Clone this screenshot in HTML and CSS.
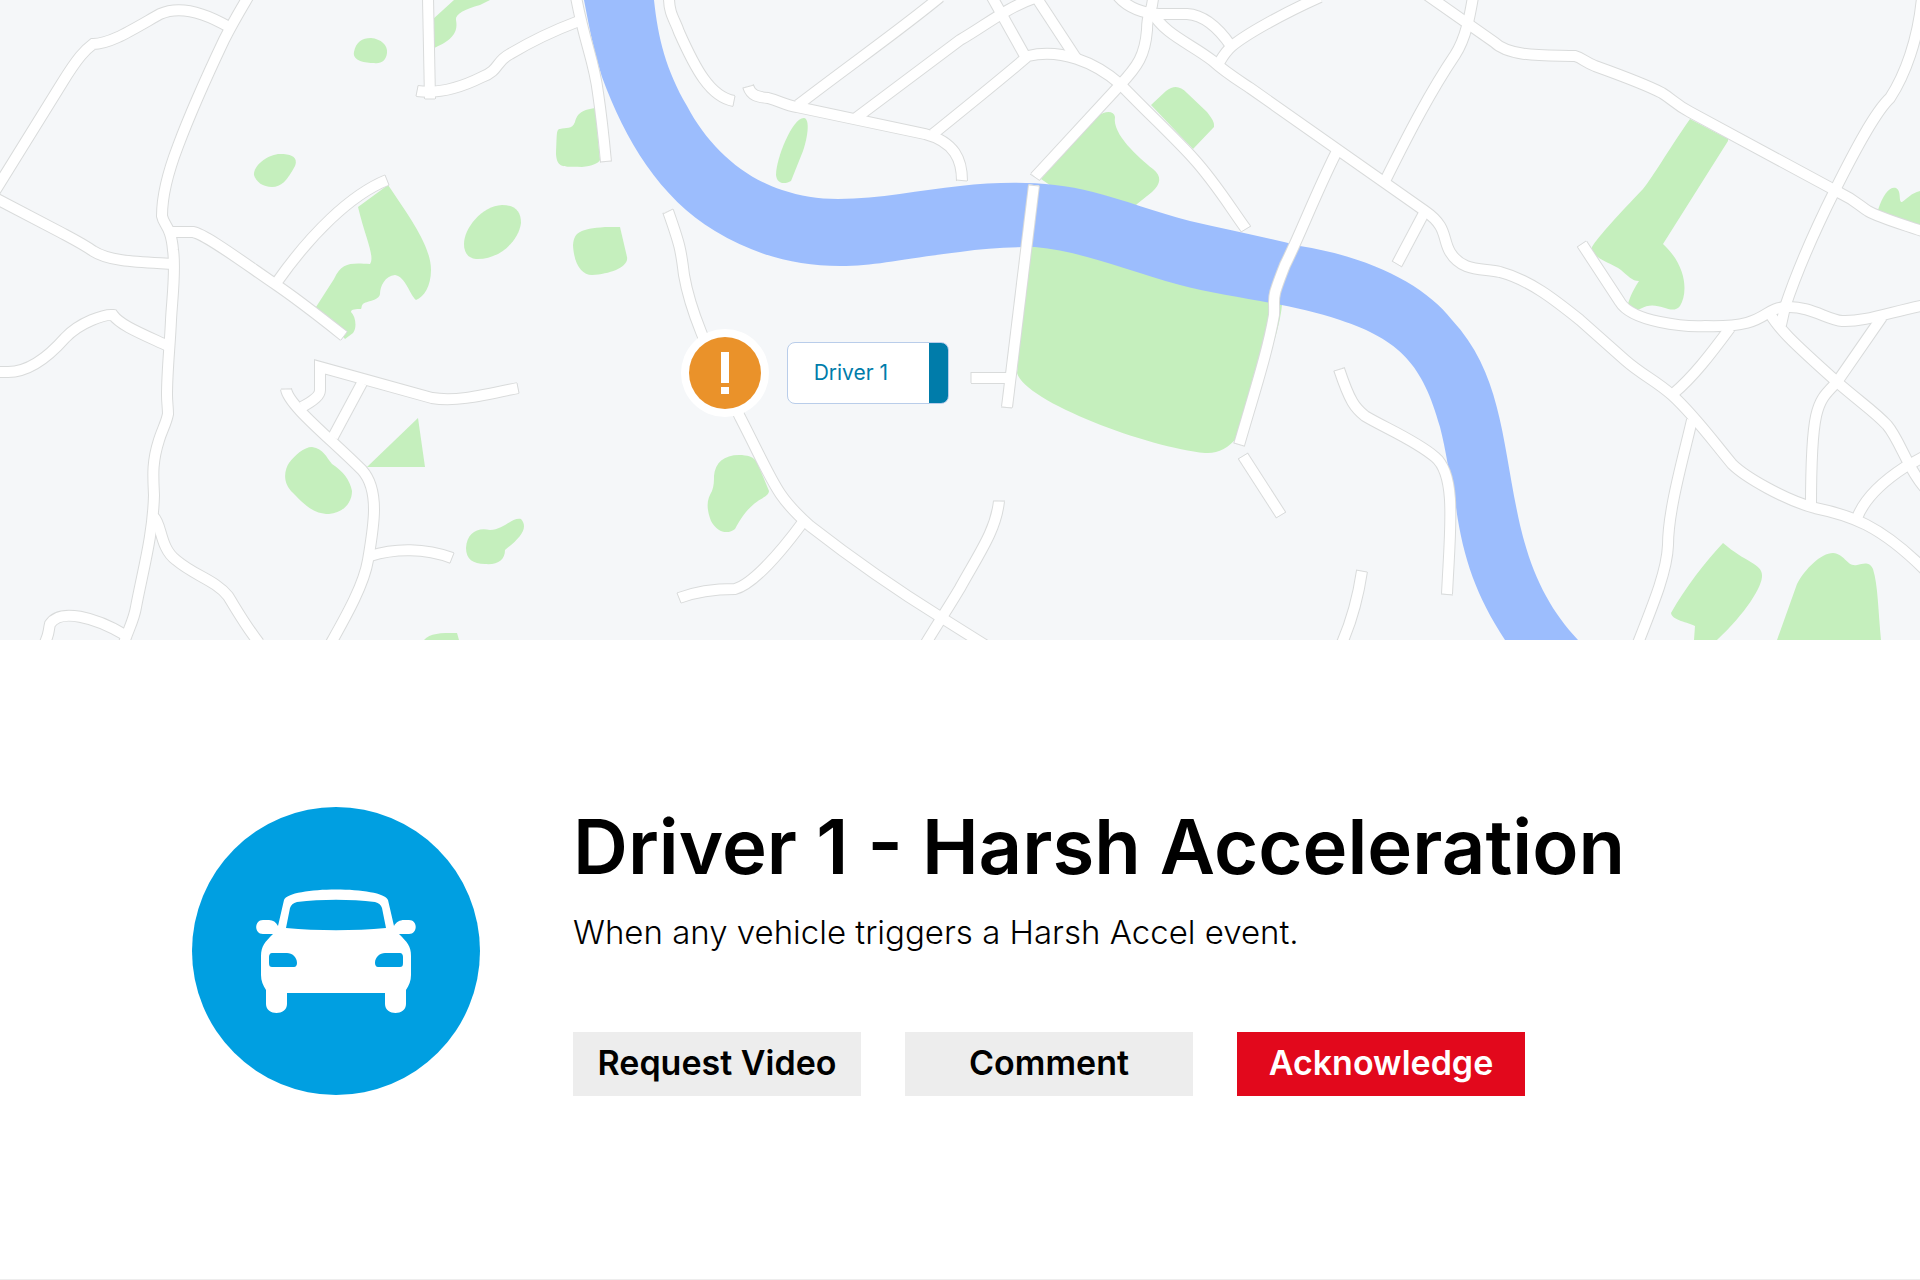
FILE: index.html
```
<!DOCTYPE html>
<html lang="en">
<head>
  <meta charset="UTF-8" />
  <title>Driver 1 - Harsh Acceleration</title>
  <meta name="viewport" content="width=device-width, initial-scale=1.0" />
  <link rel="stylesheet" href="styles.css">
</head>
<body>
  <section class="map" aria-label="Map">
    <svg class="map-canvas" viewBox="0 0 1920 640" aria-hidden="true">
      <defs>
        <g id="roads">
          <!-- west -->
          <path d="M-5 191L62 83C78 57 85 50 93 44C110 44 130 31 160 14C180 5 205 13 229 27" />
          <path d="M248 -3C238 14 232 24 224 40C206 78 190 114 178 146C168 172 162 194 162 216C164 226 171 226 173 250C176 270 172 300 171 320C170 345 167 370 167 395C167 402 168 408 168 414C166 424 162 430 159 440C152 462 153 475 154 495C153 535 143 570 136 607C134 620 128 630 124 643" />
          <path d="M-5 198L60 232C75 240 83 244 93 251C110 262 140 262 174 264" />
          <path d="M168 232H193C205 234 240 260 275 284C300 301 320 317 344 336" />
          <path d="M387 180C350 195 310 235 277 282" />
          <path d="M428 -2L430 99" />
          <path d="M417 91C445 95 470 83 482 77C500 70 495 62 510 54C530 42 555 30 579 21" />
          <path d="M-5 372H8C30 372 50 355 65 338C80 322 105 314 113 315C120 325 140 333 168 346" />
          <path d="M286 389C288 405 330 438 362 470C380 490 374 525 368 560C364 585 345 618 331 643" />
          <path d="M302 407C315 400 320 395 320 390V367L432 398C455 402 480 396 518 388" />
          <path d="M362 383L333 437" />
          <path d="M370 556C395 548 425 548 452 558" />
          <path d="M154 517C162 525 160 548 176 560C195 576 215 580 228 596C235 607 245 625 259 643" />
          <path d="M44 645C50 632 48 632 50 624C60 608 95 617 125 635" />
          <!-- centre -->
          <path d="M576 -3C585 45 594 60 598 93C602 120 603 130 606 162" />
          <path d="M669 -2C669 14 675 20 679 32C695 68 710 97 734 101" />
          <path d="M748 86C751 96 758 97 768 98C780 101 785 105 797 107L925 134C955 142 962 160 962 181" />
          <path d="M940 -3C900 30 850 65 798 105" />
          <path d="M856 118L960 40C985 26 1005 8 1037 -3" />
          <path d="M933 134C965 108 1000 80 1028 56C1060 48 1095 62 1120 84C1150 115 1175 138 1193 158C1215 182 1230 207 1246 229" />
          <path d="M992 -3L1025 56" />
          <path d="M1036 -3L1076 58" />
          <path d="M1153 -2C1152 15 1147 10 1147 30C1145 55 1138 66 1120 85L1035 177" />
          <path d="M1117 -5C1127 8 1145 14 1160 14H1187C1205 15 1220 30 1231 46" />
          <path d="M1320 -3C1280 15 1245 35 1232 46C1225 52 1222 58 1219 63" />
          <path d="M668 211C680 245 681 250 684 275C690 310 705 345 740 417C775 485 775 495 810 526C860 565 900 592 942 618L985 645" />
          <path d="M803 522C775 560 750 585 735 589C720 589 700 590 679 598" />
          <path d="M999 501C996 530 980 552 960 588C950 605 935 628 926 643" />
          <path d="M1034 185L1007 407" />
          <path d="M971 378H1012" />
          <path d="M1243 456L1281 515" />
          <path d="M1336 153C1315 195 1300 235 1285 265C1270 303 1275 295 1274 315C1268 350 1255 390 1239 445" />
          <path d="M1339 369C1350 402 1355 408 1365 416C1385 428 1415 440 1435 457C1457 475 1450 530 1447 594" />
          <path d="M1362 571C1358 598 1352 620 1342 643" />
          <!-- east -->
          <path d="M1152 12C1165 35 1190 43 1213 61C1225 72 1238 80 1250 88L1425 211C1448 227 1442 238 1450 252C1462 272 1482 268 1500 272C1530 280 1555 300 1580 320L1625 360C1642 375 1655 380 1672 395C1695 416 1712 440 1732 464C1745 477 1785 500 1815 508C1850 515 1880 525 1925 570" />
          <path d="M1424 213L1397 264" />
          <path d="M1473 -3C1470 15 1466 38 1455 55C1430 92 1408 135 1386 179" />
          <path d="M1427 -5L1494 42C1510 58 1550 55 1575 56C1582 58 1585 62 1595 66C1620 75 1645 84 1662 93C1672 99 1675 104 1690 112L1840 193C1855 200 1860 206 1868 211C1880 218 1905 225 1925 232" />
          <path d="M1922 -2C1918 40 1905 75 1890 98C1875 112 1855 150 1835 190C1815 230 1798 268 1785 307L1781 325" />
          <path d="M1582 244L1620 302C1632 322 1685 327 1705 326C1770 328 1760 308 1787 307C1810 306 1828 320 1842 321C1865 322 1890 312 1925 305" />
          <path d="M1769 312C1778 328 1790 340 1837 382C1860 402 1875 412 1887 425C1900 440 1908 470 1925 488" />
          <path d="M1882 317L1837 382C1818 402 1811 402 1811 507" />
          <path d="M1925 456L1905 467C1885 480 1865 497 1857 518" />
          <path d="M1730 328C1710 355 1693 377 1674 393" />
          <path d="M1692 420C1684 455 1668 510 1668 545C1667 570 1655 600 1638 643" />
        </g>
      </defs>

      <g class="parks">
        <path d="M432 20L454 0H490L480 5C465 9 455 14 456 20C459 35 448 42 432 49Z" />
        <path d="M354 52C356 42 362 38 371 38C381 39 388 45 387 53C386 61 381 64 374 63C366 63 352 61 354 52Z" />
        <path d="M254 175C253 165 269 154 280 154C293 154 298 158 295 166C287 181 281 187 272 187C263 187 256 182 254 175Z" />
        <path d="M388 185C414 223 431 248 431 270C431 286 424 297 416 300C410 295 405 276 395 275C385 276 380 286 380 294C379 301 366 301 363 304C361 306 362 308 361 309C356 309 351 309 351 312C356 317 357 328 353 333L345 339L316 307L334 279C342 262 351 263 370 264C375 256 366 240 358 207Z" />
        <path d="M464 244C464 228 482 206 502 205C515 205 521 211 521 223C519 240 500 260 476 259C468 258 464 253 464 244Z" />
        <path d="M595 108C580 110 577 115 575 122C572 130 566 127 560 129C556 129 557 135 556 154C557 170 566 166 582 167C592 166 599 163 600 160Z" />
        <path d="M620 227H605C580 229 574 232 573 245C574 265 582 275 592 275C610 274 629 267 627 257Z" />
        <path d="M776 175C776 158 793 117 804 118C810 119 808 136 803 151L791 181C786 184 777 185 776 175Z" />
        <path d="M1041 179L1098 116C1106 110 1114 111 1115 117C1112 134 1138 157 1153 169C1162 176 1161 184 1152 192L1137 204L1130 212L1060 192Z" />
        <path d="M1151 105L1166 91C1174 85 1180 86 1187 93L1207 112C1215 122 1214 124 1214 127L1193 149Z" />
        <path d="M1030 230L1282 290C1285 315 1270 355 1262 375L1238 436C1228 449 1217 454 1205 453C1150 448 1025 402 1017 373Z" />
        <path d="M367 467L418 418L425 467Z" />
        <path d="M289 463C295 455 304 447 312 447C324 449 326 457 332 464C343 471 350 480 352 491C352 504 342 513 329 514C312 514 303 503 291 491C282 481 285 469 289 463Z" />
        <path d="M466 548C467 533 477 527 490 530C503 530 512 517 521 519C529 528 520 538 505 550C505 560 498 565 485 564C473 564 466 559 466 548Z" />
        <path d="M424 640C430 633 440 633 457 633L459 640Z" />
        <path d="M714 476C715 462 725 454 742 455C750 456 753 457 757 462L769 491C768 500 753 495 735 529C729 534 718 534 711 521C705 505 708 498 712 491C714 486 714 480 714 476Z" />
        <path d="M1690 119C1665 155 1655 174 1643 189C1620 213 1598 237 1592 247C1590 258 1612 263 1621 270C1628 276 1632 281 1639 281C1633 290 1630 297 1628 304C1631 308 1636 311 1640 309C1658 298 1671 317 1680 306C1688 293 1687 266 1663 244L1728 141V139Z" />
        <path d="M1878 210C1883 194 1890 186 1896 188C1902 191 1898 202 1902 202C1907 199 1911 193 1920 191V226Z" />
        <path d="M1723 543C1745 562 1762 564 1762 575C1763 586 1745 614 1717 640H1694L1695 626C1684 621 1672 620 1671 613C1685 588 1705 562 1723 543Z" />
        <path d="M1777 640L1797 584C1805 569 1821 553 1833 553C1845 554 1847 567 1857 565C1863 564 1869 561 1873 569C1878 585 1878 610 1881 640Z" />
      </g>

      <path class="river" d="M584 0H654C658 38 666 70 687 106C708 146 742 177 782 190C800 196 818 199 838 199C880 199 920 190 960 186C1005 181 1050 181 1093 192C1125 200 1155 212 1190 221C1228 230 1265 237 1300 246C1370 257 1425 285 1452 320C1503 375 1502 445 1520 525C1532 576 1550 610 1578 640H1505C1475 594 1462 555 1455 500C1449 475 1446 450 1440 427C1423 365 1400 340 1340 320C1290 303 1230 298 1180 285C1125 270 1085 252 1035 247C1010 247 985 248 960 252C900 259 877 266 840 266C795 266 755 255 715 231C660 198 625 140 602 77C592 45 588 20 584 0Z" />

      <use class="road-edge" href="#roads" />
      <use class="road-fill" href="#roads" />

      <!-- closed road ends -->
      <path class="road-end" d="M385 175L389 185M347 332L341 340M418 86L416 96M425 99H435M281 389H292M517 383L519 393M454 553L450 563M600 162L611 161M663 214L673 209M735 96L733 106M743 88L754 85M956 180L967 181M1030 174L1039 180M1029 185L1039 186M1241 232L1251 226M1001 407L1012 408M971 372V383M1238 459L1248 453M1276 518L1286 512M1234 443L1244 446M1334 371L1344 368M1441 594L1453 595M1356 570L1367 572M1392 261L1402 267M1577 247L1586 241M994 501H1005M677 593L681 603" />
    </svg>

    <div class="driver-pin">
      <svg class="alert-icon" viewBox="0 0 88 88" role="img" aria-label="Alert">
        <circle cx="44" cy="44" r="44" fill="#fff" />
        <circle cx="44" cy="44" r="36" fill="#ea922a" />
        <path fill="#fff" d="M40 23h8v31h-8zM40 58h8v7h-8z" />
      </svg>
      <span class="driver-label">Driver 1</span>
    </div>
  </section>

  <main class="event">
    <svg class="event-icon" viewBox="0 0 288 288" role="img" aria-label="Vehicle">
      <circle cx="144" cy="144" r="144" fill="#009fe1" />
      <path fill="#fff" fill-rule="evenodd" d="M92 93C97 79 191 79 196 93L202 119C204 115 208 113 212 113H217C226 113 226 127 217 127H207C215 135 219 139 219 149V168C219 174 217 178 214 183V197C214 209 193 209 193 197V186H95V197C95 209 74 209 74 197V183C71 178 69 174 69 168V149C69 139 73 135 81 127H71C62 127 62 113 71 113H77C81 113 84 115 86 119ZM94 121C126 124 162 124 194 121L190 101C189 98 187 96 183 95C158 92 130 92 105 95C101 96 99 98 98 101ZM80 146C78 146 77 148 77 150V156C77 159 78 160 80 160H102C104 160 105 158 105 156C105 150 100 146 95 146ZM208 146C210 146 211 148 211 150V156C211 159 210 160 208 160H186C184 160 183 158 183 156C183 150 188 146 193 146Z" />
    </svg>

    <div class="event-details">
      <h1>Driver 1 - Harsh Acceleration</h1>
      <p>When any vehicle triggers a Harsh Accel event.</p>
      <div class="event-actions">
        <button type="button">Request Video</button>
        <button type="button">Comment</button>
        <button type="button" class="primary">Acknowledge</button>
      </div>
    </div>
  </main>
</body>
</html>
```
FILE: styles.css
```
* {
  box-sizing: border-box;
}

body {
  margin: 0;
  min-height: 100vh;
  display: flex;
  flex-direction: column;
  background: #fff;
  color: #000;
  font-family: Inter, "Open Sans", sans-serif;
}

/* Map */
.map {
  position: relative;
  background: #f5f7f9;
}

.map-canvas {
  display: block;
  width: 100%;
  height: auto;
}

.parks {
  fill: #c5efbd;
}

.river {
  fill: #9cbdfd;
}

.road-edge,
.road-fill,
.road-end {
  fill: none;
}

.road-edge {
  stroke: #d9dbdb;
  stroke-width: 12px;
}

.road-fill {
  stroke: #fff;
  stroke-width: 10px;
}

.road-end {
  stroke: #d9dbdb;
  stroke-width: 1px;
}

/* Driver marker pinned on the map */
.driver-pin {
  position: absolute;
  left: 35.45%;
  top: 51.4%;
  display: flex;
  align-items: center;
  gap: 18px;
}

.alert-icon {
  width: 88px;
  height: 88px;
}

.driver-label {
  width: 162px;
  height: 62px;
  padding-left: 26px;
  border: 1px solid #b9cdea;
  border-radius: 8px;
  background: linear-gradient(to left, #007caa 19px, #fff 19px);
  color: #007caa;
  font-size: 21px;
  line-height: 60px;
}

/* Event panel */
.event {
  flex: 1;
  display: flex;
  align-items: center;
  gap: 93px;
  padding: 0 10%;
  padding-bottom: 17px;
  border-bottom: 1px solid #ededed;
}

.event-icon {
  width: 288px;
  height: 288px;
  flex-shrink: 0;
}

h1 {
  margin: 0 0 26px;
  font-size: 76px;
  font-weight: 600;
  line-height: 80px;
}

p {
  margin: 0;
  font-size: 33px;
  font-weight: 300;
  line-height: 40px;
}

.event-actions {
  display: flex;
  flex-wrap: wrap;
  gap: 44px;
  margin-top: 80px;
}

button {
  width: 288px;
  height: 64px;
  padding: 0 0 3px;
  border: none;
  background: #ededed;
  color: #000;
  font-family: inherit;
  font-size: 34px;
  font-weight: 600;
  cursor: pointer;
}

button.primary {
  background: #e2081c;
  color: #fff;
}
```
